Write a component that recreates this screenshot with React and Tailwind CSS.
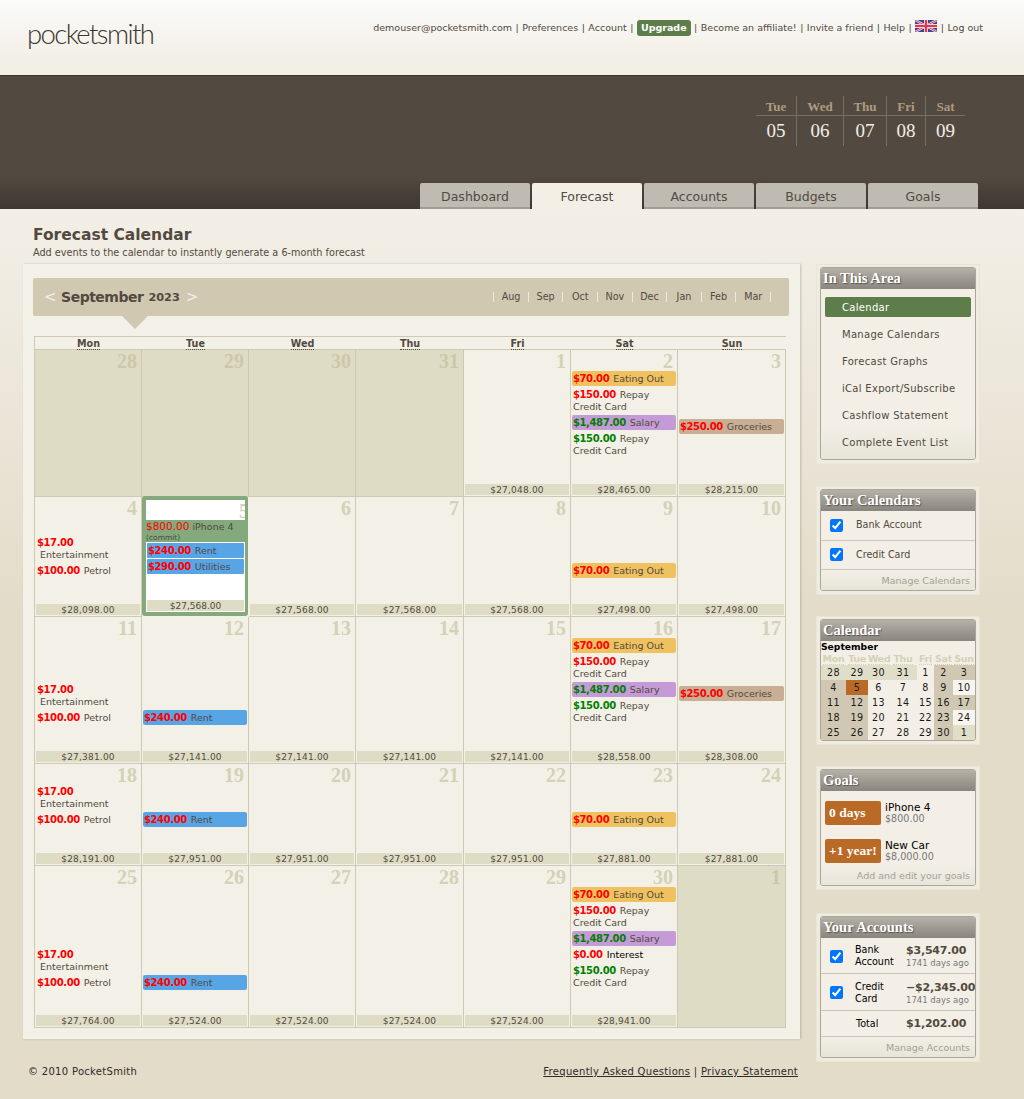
import React from 'react';

const sans = { fontFamily: '"DejaVu Sans", sans-serif' };

const pillColors = {
  orange: 'bg-[#efc25f]',
  purple: 'bg-[#c49bd6]',
  brown: 'bg-[#c8ae94]',
  blue: 'bg-[#58a5e6]',
};

const eating = { a: '$70.00', t: 'Eating Out', pill: 'orange' };
const repayOut = { a: '$150.00', t: 'Repay', t2: 'Credit Card' };
const salary = { a: '$1,487.00', t: 'Salary', pill: 'purple', income: true };
const repayIn = { a: '$150.00', t: 'Repay', t2: 'Credit Card', income: true };
const groceries = { a: '$250.00', t: 'Groceries', pill: 'brown' };
const rent = { a: '$240.00', t: 'Rent', pill: 'blue' };
const ent = { a: '$17.00', t: '', t2: '\u00a0Entertainment' };
const petrol = { a: '$100.00', t: 'Petrol' };

const weeks = [
  [
    { d: 28, muted: true },
    { d: 29, muted: true },
    { d: 30, muted: true },
    { d: 31, muted: true },
    { d: 1, bal: '$27,048.00' },
    { d: 2, bal: '$28,465.00', mt: 'mt-0', ev: [eating, repayOut, salary, repayIn] },
    { d: 3, bal: '$28,215.00', mt: 'mt-[48px]', ev: [groceries] },
  ],
  [
    { d: 4, bal: '$28,098.00', mt: 'mt-[17px]', ev: [ent, petrol] },
    { d: 5, selected: true },
    { d: 6, bal: '$27,568.00' },
    { d: 7, bal: '$27,568.00' },
    { d: 8, bal: '$27,568.00' },
    { d: 9, bal: '$27,498.00', mt: 'mt-[45px]', ev: [eating] },
    { d: 10, bal: '$27,498.00' },
  ],
  [
    { d: 11, bal: '$27,381.00', mt: 'mt-[44px]', ev: [ent, petrol] },
    { d: 12, bal: '$27,141.00', mt: 'mt-[72px]', ev: [rent] },
    { d: 13, bal: '$27,141.00' },
    { d: 14, bal: '$27,141.00' },
    { d: 15, bal: '$27,141.00' },
    { d: 16, bal: '$28,558.00', mt: 'mt-0', ev: [eating, repayOut, salary, repayIn] },
    { d: 17, bal: '$28,308.00', mt: 'mt-[48px]', ev: [groceries] },
  ],
  [
    { d: 18, bal: '$28,191.00', mt: '-mt-px', ev: [ent, petrol] },
    { d: 19, bal: '$27,951.00', mt: 'mt-[27px]', ev: [rent] },
    { d: 20, bal: '$27,951.00' },
    { d: 21, bal: '$27,951.00' },
    { d: 22, bal: '$27,951.00' },
    { d: 23, bal: '$27,881.00', mt: 'mt-[27px]', ev: [eating] },
    { d: 24, bal: '$27,881.00' },
  ],
  [
    { d: 25, bal: '$27,764.00', mt: 'mt-[60px]', ev: [ent, petrol] },
    { d: 26, bal: '$27,524.00', mt: 'mt-[88px]', ev: [rent] },
    { d: 27, bal: '$27,524.00' },
    { d: 28, bal: '$27,524.00' },
    { d: 29, bal: '$27,524.00' },
    {
      d: 30,
      bal: '$28,941.00',
      mt: 'mt-0',
      ev: [eating, repayOut, salary, { a: '$0.00', t: 'Interest', black: true }, repayIn],
    },
    { d: 1, muted: true },
  ],
];

const DayNum = ({ d, muted }) => (
  <div
    className={`h-[22px] pr-[4px] text-right font-bold text-[20px] leading-[22px] font-['Liberation_Serif',serif] ${
      muted ? 'text-[#cbc8aa]' : 'text-[#d4d1b6]'
    }`}
  >
    {d}
  </div>
);

const Amount = ({ e }) => (
  <span className={`font-bold text-[10px] tracking-[-0.4px] mr-px ${e.income ? 'text-[#008000]' : 'text-[#ff0000]'}`}>{e.a}</span>
);

const Event = ({ e }) => {
  if (e.pill) {
    return (
      <div
        className={`-mt-px mb-[2px] mx-px h-[15px] pl-px rounded-[2px] text-[9.5px] leading-[15px] whitespace-nowrap ${pillColors[e.pill]}`}
      >
        <Amount e={e} /> {e.t}
      </div>
    );
  }
  return (
    <div className={`pt-px mb-[3px] pl-[2px] text-[9.5px] leading-[12px] whitespace-nowrap ${e.black ? 'text-black' : ''}`}>
      <div>
        <Amount e={e} /> {e.t}
      </div>
      {e.t2 && <div>{e.t2}</div>}
    </div>
  );
};

const SelectedCell = () => (
  <div className="-mt-px mb-px mr-px flex flex-col p-[4px] pr-[3px] bg-[#84a97c] rounded-[3px] overflow-hidden text-[#524a40]">
    <div className="h-[20px] bg-white text-right font-bold text-[20px] leading-[22px] text-[#d4d1b6] font-['Liberation_Serif',serif] overflow-hidden">
      <span className="relative left-[4px]">5</span>
    </div>
    <div className="h-[22px] text-[9.5px] leading-[12px] whitespace-nowrap">
      <span className="text-[10.5px] text-[#ff0000]">$800.00</span> iPhone 4
      <div className="text-[7.5px] leading-[9px]">(commit)</div>
    </div>
    <div className="flex-1 flex flex-col bg-white p-px">
      <div className="h-[15px] mb-px pl-px rounded-[1px] bg-[#58a5e6] text-[9.5px] leading-[15px] whitespace-nowrap">
        <Amount e={{ a: '$240.00' }} /> Rent
      </div>
      <div className="h-[15px] pl-px rounded-[1px] bg-[#58a5e6] text-[9.5px] leading-[15px] whitespace-nowrap">
        <Amount e={{ a: '$290.00' }} /> Utilities
      </div>
      <div className="mt-auto h-[11px] bg-[#dfdcc5] text-center text-[9px] leading-[12px]">$27,568.00</div>
    </div>
  </div>
);

const Cell = ({ c }) => {
  if (c.selected) return <SelectedCell />;
  return (
    <div
      className={`flex flex-col border-r border-b border-[#cfc8b2] overflow-hidden ${
        c.muted ? 'bg-[#dfdcc5]' : ''
      }`}
    >
      <DayNum d={c.d} muted={c.muted} />
      {c.ev && (
        <div className={c.mt}>
          {c.ev.map((e, i) => (
            <Event key={i} e={e} />
          ))}
        </div>
      )}
      {c.bal && (
        <div className="mt-auto mx-px mb-px h-[11px] bg-[#dfdcc5] text-center text-[9px] leading-[12px] tracking-[0.2px]">
          {c.bal}
        </div>
      )}
    </div>
  );
};

const Widget = ({ title, children, className = '' }) => (
  <div className={`px-[3px] pt-[2px] pb-[3px] bg-[#efebdf] border border-[#e9e5d8] ${className}`}>
    <div className="bg-[#f3efe7] border border-[#aaa699] rounded-[3px] overflow-hidden">
      <div className="h-[21px] pl-[2px] bg-gradient-to-b from-[#b5b1a8] to-[#8a867e] text-white font-bold text-[14.5px] leading-[21px] font-['Liberation_Serif',serif] [text-shadow:1px_1px_1px_#555]">
        {title}
      </div>
      {children}
    </div>
  </div>
);

const WidgetFoot = ({ children, className = '' }) => (
  <div className={`h-[20px] pr-[5px] text-right text-[9.5px] leading-[22px] text-[#a5a195] bg-gradient-to-b from-[#f3efe7] to-[#e7e4d9] ${className}`}>
    {children}
  </div>
);

const Check = () => <input type="checkbox" checked readOnly className="w-[13px] h-[13px] m-0 shrink-0" />;

const sideLinks = ['Manage Calendars', 'Forecast Graphs', 'iCal Export/Subscribe', 'Cashflow Statement', 'Complete Event List'];

const weekDays = ['Mon', 'Tue', 'Wed', 'Thu', 'Fri', 'Sat', 'Sun'];
const M = 'bg-[#e0dec8]';
const D = 'bg-[#d0c8b2]';
const W = 'bg-[#f7f5ef]';
const P = '';
const O = 'bg-[#b96a26]';
const mini = [
  [[28, M], [29, M], [30, M], [31, M], [1, P], [2, D], [3, D]],
  [[4, D], [5, O], [6, P], [7, P], [8, P], [9, D], [10, W]],
  [[11, D], [12, D], [13, P], [14, P], [15, P], [16, D], [17, D]],
  [[18, D], [19, D], [20, P], [21, P], [22, P], [23, D], [24, W]],
  [[25, D], [26, D], [27, P], [28, P], [29, P], [30, D], [1, M]],
];

const FlagIcon = () => (
  <svg width="22" height="12" viewBox="0 0 22 12" className="inline-block align-[-1px]">
    <rect width="22" height="12" fill="#2f4a9c" />
    <path d="M0 0L22 12M22 0L0 12" stroke="#f3d8dc" strokeWidth="2.4" />
    <path d="M0 0L22 12M22 0L0 12" stroke="#e2384f" strokeWidth="0.9" />
    <path d="M11 0V12M0 6H22" stroke="#f3d8dc" strokeWidth="4" />
    <path d="M11 0V12M0 6H22" stroke="#e2384f" strokeWidth="2.2" />
  </svg>
);

const Sep = () => <span className="mx-[3.5px]">|</span>;

export default function App() {
  return (
    <div style={sans} className="w-[1024px] min-h-[1099px] text-[#524a40] text-[9.6px]">
      {/* top bar */}
      <div className="h-[75px] flex justify-between pl-[27px] pr-[41px] bg-gradient-to-b from-[#fbfbfa] to-[#f3efe7] to-80%">
        <div className="pt-[16px] text-[27.5px] leading-[36px] font-light tracking-[-1.6px] text-[#3c352d] font-['Lato',sans-serif]">
          pocketsmith
        </div>
        <div className="pt-[20px] h-[36px] text-[9.5px] leading-[16px] whitespace-nowrap">
          demouser@pocketsmith.com
          <Sep />Preferences
          <Sep />Account
          <Sep />
          <span className="inline-block px-[4px] rounded-[3px] bg-[#5d7d4a] text-white font-bold">Upgrade</span>
          <Sep />Become an affiliate!
          <Sep />Invite a friend
          <Sep />Help
          <Sep />
          <FlagIcon />
          <Sep />Log out
        </div>
      </div>

      {/* dark band */}
      <div className="h-[134px] flex flex-col border-t border-[#3a332c] bg-[#524a40] bg-gradient-to-b from-[#524a40] from-[75%] to-[#3e3731]">
        <div className="flex justify-end pt-[20px] pr-[59px] font-['Liberation_Serif',serif]">
          {[
            ['Tue', '05', 'w-[41px]'],
            ['Wed', '06', 'w-[47px]'],
            ['Thu', '07', 'w-[43px]'],
            ['Fri', '08', 'w-[39px]'],
            ['Sat', '09', 'w-[39px]'],
          ].map(([day, num, w], i) => (
            <div key={day} className={`${w} text-center ${i < 4 ? 'border-r border-[#776e63]' : ''}`}>
              <div className="h-[20px] border-b border-[#776e63] text-[13px] leading-[22px] font-bold text-[#b09a80]">{day}</div>
              <div className="h-[30px] text-[19px] leading-[30px] text-[#f3efe7]">{num}</div>
            </div>
          ))}
        </div>
        <div className="mt-auto flex justify-end gap-[2px] pr-[46px]">
          {['Dashboard', 'Forecast', 'Accounts', 'Budgets', 'Goals'].map((t) => (
            <div
              key={t}
              className={`w-[110px] h-[26px] rounded-t-[2px] text-center text-[12.5px] leading-[27px] ${
                t === 'Forecast' ? 'bg-[#f3efe7]' : 'bg-[#bfbbb3] border-b-2 border-[#a29d92]'
              }`}
            >
              {t}
            </div>
          ))}
        </div>
      </div>

      {/* body */}
      <div className="h-[890px] flex bg-gradient-to-b from-[#f3efe7] to-[#e2dcc9] to-[45%]">
        <div className="w-[816px] shrink-0 pl-[23px]">
          <div className="h-[55px] pt-[15px] pl-[10px]">
            <div className="text-[15.5px] leading-[22px] font-bold">Forecast Calendar</div>
            <div className="text-[9.7px] leading-[14px]">Add events to the calendar to instantly generate a 6-month forecast</div>
          </div>

          <div className="w-[777px] h-[775px] pt-[14px] pl-[10px] pr-[11px] bg-[#f3f0e7] shadow-[1px_0_2px_rgba(120,110,90,0.35)]">
            <div className="h-[38px] flex items-center justify-between pl-[11px] pr-[18px] bg-[#d0c8b0] rounded-[2px]">
              <div className="flex items-center font-bold text-[14px] tracking-[-0.5px]">
                <span className="text-[#f3efe7] font-normal text-[15px] mr-[5px]">&lt;</span>
                September
                <span className="text-[11.3px] ml-[5px] mt-[2px] tracking-normal">2023</span>
                <span className="text-[#f3efe7] font-normal text-[15px] ml-[6px]">&gt;</span>
              </div>
              <div className="flex border-l border-[#efeadc] h-[10px] text-[9.6px] leading-[10px]">
                {['Aug', 'Sep', 'Oct', 'Nov', 'Dec', 'Jan', 'Feb', 'Mar'].map((m) => (
                  <div key={m} className="w-[34.6px] text-center border-r border-[#efeadc]">
                    {m}
                  </div>
                ))}
              </div>
            </div>
            <div className="ml-[89px] w-0 h-0 border-x-[13px] border-t-[13px] border-x-transparent border-t-[#d0c8b0]"></div>

            <div className="ml-px mt-[7px] w-[752px] border-l border-[#cfc8b2]">
              <div className="h-[13px] grid grid-cols-[107px_107px_107px_108px_107px_107px_108px] border-t border-[#cfc8b2] text-center font-bold text-[9.6px] leading-[13px]">
                {weekDays.map((h) => (
                  <div key={h}>
                    <span className="border-b border-dotted border-[#524a40] leading-[10px] inline-block">{h}</span>
                  </div>
                ))}
              </div>
              <div className="grid grid-cols-[107px_107px_107px_108px_107px_107px_108px] grid-rows-[147px_120px_147px_102px_162px] border-t border-[#cfc8b2]">
                {weeks.flat().map((c, i) => (
                  <Cell key={i} c={c} />
                ))}
              </div>
            </div>
          </div>

          <div className="w-[793px] -ml-[18px] pl-[23px] mt-[26px] flex justify-between text-[10px] leading-[14px] text-[#2f2a24] tracking-[0.3px]">
            <div>© 2010 PocketSmith</div>
            <div>
              <span className="underline">Frequently Asked Questions</span> | <span className="underline">Privacy Statement</span>
            </div>
          </div>
        </div>

        <div className="w-[164px] pt-[55px]">
          <Widget title="In This Area">
            <div className="h-[170px] px-[4px] pt-[8px] bg-gradient-to-b from-[#f3efe7] from-[80%] to-[#e7e4d9] text-[10px] tracking-[0.3px]">
              <div className="h-[20px] pl-[17px] rounded-[2px] bg-[#5d7d4a] text-white leading-[21px]">Calendar</div>
              {sideLinks.map((l) => (
                <div key={l} className="pl-[17px] mt-[7px] h-[20px] leading-[21px]">
                  {l}
                </div>
              ))}
            </div>
          </Widget>

          <Widget title="Your Calendars" className="mt-[22px]">
            {['Bank Account', 'Credit Card'].map((n) => (
              <div key={n} className="h-[29.5px] flex items-center pl-[9px] gap-[13px] border-b border-[#c9c5b9]">
                <Check />
                {n}
              </div>
            ))}
            <WidgetFoot>Manage Calendars</WidgetFoot>
          </Widget>

          <Widget title="Calendar" className="mt-[21px]">
            <div className="font-bold text-[9.2px] leading-[12px] text-black">September</div>
            <div className="grid grid-cols-[25px_22px_21px_28px_17px_19px_22px] text-center">
              {weekDays.map((h) => (
                <div key={h} className="h-[12px] text-[9.5px] tracking-[-0.3px] leading-[11px] font-bold text-[#d4d1b6] whitespace-nowrap">
                  <span className="border-b border-dotted border-[#d4d1b6] inline-block leading-[10px]">{h}</span>
                </div>
              ))}
              {mini.flat().map(([d, bg], i) => (
                <div key={i} className={`h-[15px] leading-[16px] text-[#1a1a1a] tracking-[0.3px] ${bg}`}>
                  {d}
                </div>
              ))}
            </div>
          </Widget>

          <Widget title="Goals" className="mt-[21px]">
            <div className="px-[4px] pt-[10px]">
              {[
                ['0 days', 'iPhone 4', '$800.00'],
                ['+1 year!', 'New Car', '$8,000.00'],
              ].map(([b, n, v], i) => (
                <div key={n} className={`flex items-center gap-[4px] ${i ? 'mt-[14px]' : ''}`}>
                  <div className="w-[56px] h-[24px] pl-[4px] rounded-[2px] bg-[#b96a26] text-white font-bold text-[13.5px] leading-[24px] whitespace-nowrap font-['Liberation_Serif',serif]">
                    {b}
                  </div>
                  <div className="leading-[12px]">
                    <div className="text-[10.5px] text-black">{n}</div>
                    <div className="text-[9.6px] text-[#777]">{v}</div>
                  </div>
                </div>
              ))}
            </div>
            <WidgetFoot className="mt-[2px]">Add and edit your goals</WidgetFoot>
          </Widget>

          <Widget title="Your Accounts" className="mt-[23px]">
            {[
              ['Bank', 'Account', '$3,547.00', 'h-[36px]'],
              ['Credit', 'Card', '−$2,345.00', 'h-[37px]'],
            ].map(([a, b, v, h]) => (
              <div key={a} className={`${h} pt-px flex items-center pl-[9px] border-b border-[#c9c5b9]`}>
                <Check />
                <div className="w-[63px] pl-[12px] shrink-0 text-black leading-[12px]">
                  {a}
                  <br />
                  {b}
                </div>
                <div className="whitespace-nowrap">
                  <div className="text-[11px] tracking-[-0.2px] leading-[14px] font-bold">{v}</div>
                  <div className="text-[8.5px] leading-[10px] text-[#777]">1741 days ago</div>
                </div>
              </div>
            ))}
            <div className="h-[26px] pt-[2px] flex items-center border-b border-[#c9c5b9]">
              <div className="w-[85px] pl-[35px] text-black">Total</div>
              <div className="text-[11px] tracking-[-0.2px] font-bold">$1,202.00</div>
            </div>
            <WidgetFoot>Manage Accounts</WidgetFoot>
          </Widget>
        </div>
      </div>
    </div>
  );
}
